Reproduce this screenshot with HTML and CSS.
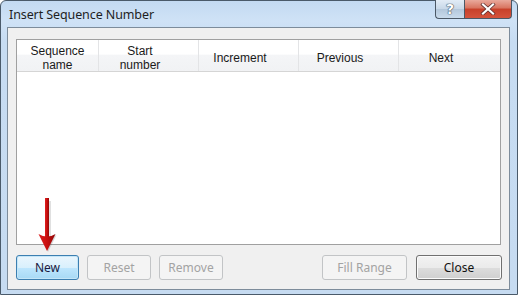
FILE: index.html
```html
<!DOCTYPE html>
<html>
<head>
<meta charset="utf-8">
<link rel="stylesheet" href="styles.css">
</head>
<body>
<div class="window">
  <div class="titlebar">
    <span class="title">Insert Sequence Number</span>
    <div class="caption-btns">
      <div class="cap-btn help">?</div>
      <div class="cap-btn close">
        <svg width="16" height="12" viewBox="0 0 16 12"><path d="M3 1.5 L13 10.5 M13 1.5 L3 10.5" stroke="#5a2a2a" stroke-width="3.6" stroke-linecap="square"/><path d="M3 1.5 L13 10.5 M13 1.5 L3 10.5" stroke="#ffffff" stroke-width="2.2" stroke-linecap="square"/></svg>
      </div>
    </div>
  </div>
  <div class="client">
    <div class="table">
      <div class="thead">
        <div class="th c1">Sequence<br>name</div>
        <div class="th">Start<br>number</div>
        <div class="th">Increment</div>
        <div class="th">Previous</div>
        <div class="th last">Next</div>
      </div>
      <div class="tbody"></div>
    </div>
    <div class="buttons">
      <button class="btn focused w-new">New</button>
      <button class="btn disabled w-reset">Reset</button>
      <button class="btn disabled w-remove">Remove</button>
      <div class="spacer"></div>
      <button class="btn disabled w-fill">Fill Range</button>
      <button class="btn normal w-close">Close</button>
    </div>
    <svg class="arrow" width="24" height="60" viewBox="0 0 24 60">
      <defs>
        <linearGradient id="ag" x1="0" x2="1" y1="0" y2="0">
          <stop offset="0" stop-color="#e02020"/>
          <stop offset="0.5" stop-color="#c80f0f"/>
          <stop offset="1" stop-color="#8e0808"/>
        </linearGradient>
      </defs>
      <path d="M10.5 4 L14.5 4 L14.5 41 L13 41 Z" fill="#000" opacity="0.12" transform="translate(1.5,1)"/>
      <rect x="10" y="2" width="4" height="40" fill="url(#ag)"/>
      <path d="M3.5 38 L12 55 L20.5 38 Q12 43 3.5 38 Z" fill="#000" opacity="0.15" transform="translate(1,1)"/>
      <path d="M3.5 38 L12 55 L20.5 38 Q12 43 3.5 38 Z" fill="url(#ag)"/>
    </svg>
  </div>
</div>
</body>
</html>
```
FILE: styles.css
```css
html, body {
  margin: 0;
  padding: 0;
  background: #ffffff;
}
body {
  font-family: "Noto Sans", "Open Sans", "DejaVu Sans", sans-serif;
  font-size: 12px;
  color: #000;
}
.window {
  box-sizing: border-box;
  width: 518px;
  height: 295px;
  border: 1px solid #4a5a6a;
  border-radius: 6px 6px 0 0;
  background: linear-gradient(to bottom, #c3daf2 0px, #cfe2f6 20px, #c7dcf2 40px, #c6dbf1 100%);
  padding: 0 7px 4px 6px;
  display: flex;
  flex-direction: column;
}
.titlebar {
  height: 27px;
  display: flex;
  justify-content: space-between;
  align-items: flex-start;
}
.title {
  margin-left: 2px;
  margin-top: 5px;
  font-size: 12.5px;
  color: #1e1e1e;
  letter-spacing: -0.1px;
}
.caption-btns {
  display: flex;
  margin-right: -2px;
  margin-top: -1px;
}
.cap-btn {
  box-sizing: border-box;
  height: 19px;
  border: 1px solid #4b5866;
  border-top: none;
  display: flex;
  align-items: center;
  justify-content: center;
}
.help {
  width: 29px;
  border-right: none;
  border-radius: 0 0 0 4px;
  background: linear-gradient(to bottom, #e2ecf6 0%, #c8d8e8 50%, #b3c7db 51%, #c9dbec 100%);
  color: #ffffff;
  font-family: "DejaVu Sans", sans-serif;
  font-weight: bold;
  font-size: 14px;
  text-shadow: 0 0 1px #3b4a5a, 0 0 1px #3b4a5a, 0 0 1px #3b4a5a;
}
.close {
  width: 48px;
  border-radius: 0 0 4px 0;
  background: linear-gradient(to bottom, #e9a99c 0%, #d8735f 45%, #c7402a 50%, #d5533c 100%);
}
.client {
  flex: 1;
  position: relative;
  border: 1px solid #7d8c9b;
  background: #f0f0f0;
  padding: 11px 8px 9px 8px;
  display: flex;
  flex-direction: column;
}
.table {
  height: 206px;
  box-sizing: border-box;
  border: 1px solid #a0a0a0;
  background: #ffffff;
  display: flex;
  flex-direction: column;
}
.thead {
  height: 32px;
  box-sizing: border-box;
  display: flex;
  border-bottom: 1px solid #d5d5d5;
  background: linear-gradient(to bottom, #ffffff 0%, #ffffff 45%, #f4f5f7 50%, #f1f2f4 100%);
}
.th {
  width: 100px;
  box-sizing: border-box;
  border-right: 1px solid #e3e4e6;
  display: flex;
  align-items: center;
  justify-content: center;
  text-align: center;
  font-family: "Liberation Sans", Arial, sans-serif;
  font-size: 12px;
  line-height: 13.8px;
  padding: 6px 17px 0 0;
  color: #1a1a1a;
}
.th.c1 {
  width: 82px;
  padding-right: 0;
}
.th.last {
  flex: 1;
  border-right: none;
}
.tbody {
  flex: 1;
}
.buttons {
  margin-top: 10px;
  display: flex;
  gap: 8px;
}
.spacer {
  flex: 1;
}
.btn {
  box-sizing: border-box;
  height: 25px;
  border-radius: 3px;
  font-family: inherit;
  font-size: 12px;
  padding: 0;
  margin: 0;
}
.w-new { width: 63px; }
.w-reset { width: 64px; }
.w-remove { width: 64px; }
.w-fill { width: 85px; }
.w-close { width: 86px; margin-left: 1px; margin-right: -1px; }
.focused {
  border: 1px solid #3c7fb1;
  background: linear-gradient(to bottom, #eaf6fd 0%, #d9f0fc 50%, #bee6fd 51%, #a7d9f5 100%);
  box-shadow: inset 0 0 0 1px #c4e6f8;
  color: #1a1a40;
}
.disabled {
  border: 1px solid #c2c4c6;
  background: #f4f4f4;
  color: #a3a3a3;
}
.normal {
  border: 1px solid #707070;
  background: linear-gradient(to bottom, #f2f2f2 0%, #ebebeb 50%, #dddddd 51%, #cfcfcf 100%);
  box-shadow: inset 0 0 0 1px #fbfbfb;
  color: #111;
}
.arrow {
  position: absolute;
  left: 27px;
  top: 168px;
}
```
